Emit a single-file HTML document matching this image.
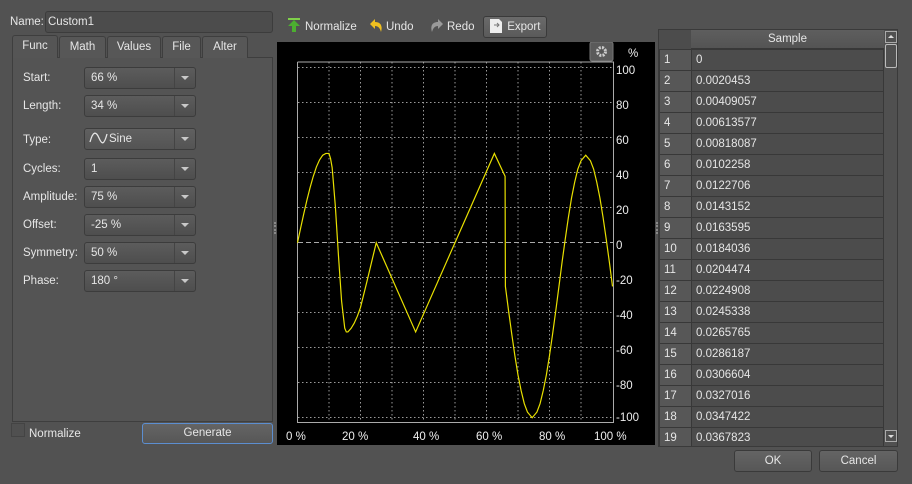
<!DOCTYPE html>
<html><head><style>
*{box-sizing:border-box;margin:0;padding:0}
body{width:912px;height:484px;background:#525252;font-family:"Liberation Sans",sans-serif;font-size:11.5px;color:#e6e6e6;position:relative;overflow:hidden}
.a{position:absolute}
.lbl{position:absolute;line-height:14px}
.combo{position:absolute;left:84px;width:112px;height:22px;border:1px solid #3c3c3c;border-radius:3px;background:linear-gradient(#5c5c5c,#4e4e4e);padding-left:6px;line-height:20px}
.combo:after{content:"";position:absolute;right:0;top:0;width:20px;height:20px;border-left:1px solid #444;}
.combo i{position:absolute;right:6px;top:8px;width:0;height:0;border-left:4px solid transparent;border-right:4px solid transparent;border-top:4px solid #c8c8c8;z-index:2}
.tab{position:absolute;top:36px;height:22px;border:1px solid #3e3e3e;border-bottom:none;border-radius:3px 3px 0 0;background:#575757;text-align:center;line-height:20px}
.btn{position:absolute;border:1px solid #3a3a3a;border-radius:3px;background:linear-gradient(#646464,#575757);text-align:center;line-height:19px}
table{border-collapse:collapse}
td{height:21px;border:1px solid #383838;padding-left:4px;line-height:19px}
</style></head><body>
<div class="lbl" style="left:10px;top:15px">Name:</div>
<div class="a" style="left:45px;top:11px;width:228px;height:22px;border:1px solid #3c3c3c;border-radius:3px;background:#4c4c4c;padding-left:2px;line-height:20px">Custom1</div>
<div class="a" style="left:12px;top:57px;width:261px;height:365px;border:1px solid #3e3e3e;background:#545454"></div>
<div class="tab" style="left:12px;width:46px;top:35px;height:23px;background:#555">Func</div>
<div class="tab" style="left:59px;width:47px">Math</div>
<div class="tab" style="left:107px;width:54px">Values</div>
<div class="tab" style="left:162px;width:39px">File</div>
<div class="tab" style="left:202px;width:46px">Alter</div>
<div class="lbl" style="left:23px;top:71px">Start:</div><div class="combo" style="top:67px">66 %<i></i></div>
<div class="lbl" style="left:23px;top:99px">Length:</div><div class="combo" style="top:95px">34 %<i></i></div>
<div class="lbl" style="left:23px;top:133px">Type:</div><div class="combo" style="top:128px;background:linear-gradient(#606060,#545454);padding-left:4px"><svg width="20" height="14" style="vertical-align:-3px"><path d="M1 11 C4 0,7 0,10 7 S15 14,18 3" fill="none" stroke="#e6e6e6" stroke-width="1.3"/></svg>Sine<i></i></div>
<div class="lbl" style="left:23px;top:162px">Cycles:</div><div class="combo" style="top:158px">1<i></i></div>
<div class="lbl" style="left:23px;top:190px">Amplitude:</div><div class="combo" style="top:186px">75 %<i></i></div>
<div class="lbl" style="left:23px;top:218px">Offset:</div><div class="combo" style="top:214px">-25 %<i></i></div>
<div class="lbl" style="left:23px;top:246px">Symmetry:</div><div class="combo" style="top:242px">50 %<i></i></div>
<div class="lbl" style="left:23px;top:274px">Phase:</div><div class="combo" style="top:270px">180 °<i></i></div>
<div class="a" style="left:11px;top:423px;width:14px;height:14px;border:1px solid #444;background:#505050"></div>
<div class="lbl" style="left:29px;top:427px">Normalize</div>
<div class="btn" style="left:142px;top:423px;width:131px;height:21px;border-color:#5c8ed0">Generate</div>
<div class="a" style="left:274px;top:222px;width:2px;height:12px;border-left:2px dotted #888"></div>
<!-- toolbar -->
<svg class="a" style="left:286px;top:17px" width="16" height="16"><rect x="2" y="1" width="12" height="2" fill="#7fd04a"/><path d="M8 3 L14 9 H10 V15 H6 V9 H2Z" fill="#4caf30"/></svg>
<div class="lbl" style="left:305px;top:20px">Normalize</div>
<svg class="a" style="left:368px;top:18px" width="16" height="16"><path d="M2 6 L7 1 V4 C12 4,15 7,13 14 C12 10,10 8,7 8 V11Z" fill="#f0c020"/></svg>
<div class="lbl" style="left:386px;top:20px">Undo</div>
<svg class="a" style="left:429px;top:18px" width="16" height="16"><path d="M14 6 L9 1 V4 C4 4,1 7,3 14 C4 10,6 8,9 8 V11Z" fill="#9a9a9a"/></svg>
<div class="lbl" style="left:447px;top:20px">Redo</div>
<div class="btn" style="left:483px;top:16px;width:64px;height:22px;line-height:20px;text-align:left;padding-left:4px;background:linear-gradient(#6a6a6a,#5a5a5a)"><svg width="16" height="16" style="vertical-align:-4px"><path d="M2 1 H11 L14 4 V15 H2Z" fill="#eee"/><path d="M6 7 H11 M9 5 L11 7 L9 9" stroke="#777" fill="none"/></svg> Export</div>
<!-- plot -->
<svg class="a" style="left:277px;top:42px" width="378" height="403">
<rect width="378" height="403" fill="#000"/>
<g transform="translate(-277,-42)">
<g stroke="#9a9a9a" stroke-dasharray="1.5,2.5" stroke-width="1">
<path d="M329 62V422M360.5 62V422M392 62V422M423.5 62V422M455 62V422M486.5 62V422M518 62V422M549.5 62V422M581 62V422"/>
<path d="M298 67.5H613M298 102.5H613M298 137.5H613M298 172.5H613M298 207.5H613M298 277.5H613M298 312.5H613M298 347.5H613M298 382.5H613M298 417.5H613"/>
</g>
<path d="M298 242.5H613" stroke="#aaa" stroke-dasharray="5,3"/>
<path d="M297.5 62V422.5H613.5V62H297.5" fill="none" stroke="#aaa"/>
<rect x="590" y="42" width="23" height="19" rx="2" fill="#5a5a5a" stroke="#777"/>
<circle cx="601.5" cy="51.5" r="4" fill="none" stroke="#ccc" stroke-width="3" stroke-dasharray="2,1.2"/>
<circle cx="601.5" cy="51.5" r="2" fill="#555"/>
<g transform="translate(297.5,242.7) scale(3.15,-1.75)">
<polyline fill="none" stroke="#e8e000" stroke-width="1.2" vector-effect="non-scaling-stroke" points="0,0 1,8.4 2,16.6 3,24.4 4,31.5 5,37.9 6,43.3 7,47.3 8,50 9,51 10,51 10.5,48 11,42.9 12,21.2 13,-7.3 14,-33.4 15,-48.9 15.5,-51 16,-51 17,-49 18,-46 19,-42 20,-37 22,-22.5 25,0 37.5,-51 62.5,51 65.9,38 66,-25 67,-38.8 68,-52 69,-64.5 70,-75.6 71,-84.6 72,-92 73,-96.8 74.5,-100 76,-96.8 77,-92 78,-84.6 79,-75.6 80,-64.5 81,-52 82,-38.8 83,-25 84,-11 85,2.1 86,14.5 87,25.6 88,34.6 89,42.1 90,46.8 91.5,50 93,46.8 94,42.1 95,34.6 96,25.6 97,14.5 98,2.1 99,-11 100,-25"/>
</g>
<g fill="#eee" font-size="11.5" font-family="Liberation Sans">
<text x="628" y="57">%</text>
<text x="616" y="74">100</text><text x="616" y="109">80</text><text x="616" y="144">60</text><text x="616" y="179">40</text><text x="616" y="214">20</text><text x="616" y="249">0</text><text x="616" y="284">-20</text><text x="616" y="319">-40</text><text x="616" y="354">-60</text><text x="616" y="389">-80</text><text x="616" y="421">-100</text>
<text x="286" y="440">0 %</text><text x="342" y="440">20 %</text><text x="413" y="440">40 %</text><text x="476" y="440">60 %</text><text x="539" y="440">80 %</text><text x="594" y="440">100 %</text>
</g></g></svg>
<div class="a" style="left:656px;top:222px;width:2px;height:12px;border-left:2px dotted #888"></div>
<!-- table -->
<div class="a" style="left:658px;top:29px;width:240px;height:418px;border:1px solid #3a3a3a;background:#4c4c4c;overflow:hidden">
<div style="height:19px;margin-left:32px;width:193px;background:linear-gradient(#5e5e5e,#545454);border-bottom:1px solid #383838;text-align:center;line-height:18px">Sample</div>
<table style="width:225px">
<colgroup><col style="width:32px"><col></colgroup>
<tr><td style="background:#575757">1</td><td>0</td></tr>
<tr><td style="background:#575757">2</td><td>0.0020453</td></tr>
<tr><td style="background:#575757">3</td><td>0.00409057</td></tr>
<tr><td style="background:#575757">4</td><td>0.00613577</td></tr>
<tr><td style="background:#575757">5</td><td>0.00818087</td></tr>
<tr><td style="background:#575757">6</td><td>0.0102258</td></tr>
<tr><td style="background:#575757">7</td><td>0.0122706</td></tr>
<tr><td style="background:#575757">8</td><td>0.0143152</td></tr>
<tr><td style="background:#575757">9</td><td>0.0163595</td></tr>
<tr><td style="background:#575757">10</td><td>0.0184036</td></tr>
<tr><td style="background:#575757">11</td><td>0.0204474</td></tr>
<tr><td style="background:#575757">12</td><td>0.0224908</td></tr>
<tr><td style="background:#575757">13</td><td>0.0245338</td></tr>
<tr><td style="background:#575757">14</td><td>0.0265765</td></tr>
<tr><td style="background:#575757">15</td><td>0.0286187</td></tr>
<tr><td style="background:#575757">16</td><td>0.0306604</td></tr>
<tr><td style="background:#575757">17</td><td>0.0327016</td></tr>
<tr><td style="background:#575757">18</td><td>0.0347422</td></tr>
<tr><td style="background:#575757">19</td><td>0.0367823</td></tr>
</table>
<div class="a" style="left:225px;top:0;width:14px;height:418px;background:#505050"></div>
<div class="a" style="left:226px;top:1px;width:12px;height:12px;border:1px solid #aaa"><div style="margin:3px auto 0;width:0;border-left:3px solid transparent;border-right:3px solid transparent;border-bottom:3px solid #ddd"></div></div>
<div class="a" style="left:226px;top:14px;width:12px;height:24px;border:1px solid #bbb;border-radius:2px"></div>
<div class="a" style="left:226px;top:400px;width:12px;height:12px;border:1px solid #aaa"><div style="margin:4px auto 0;width:0;border-left:3px solid transparent;border-right:3px solid transparent;border-top:3px solid #ddd"></div></div>
</div>
<div class="btn" style="left:734px;top:450px;width:78px;height:22px;line-height:20px">OK</div>
<div class="btn" style="left:819px;top:450px;width:79px;height:22px;line-height:20px">Cancel</div>
</body></html>
